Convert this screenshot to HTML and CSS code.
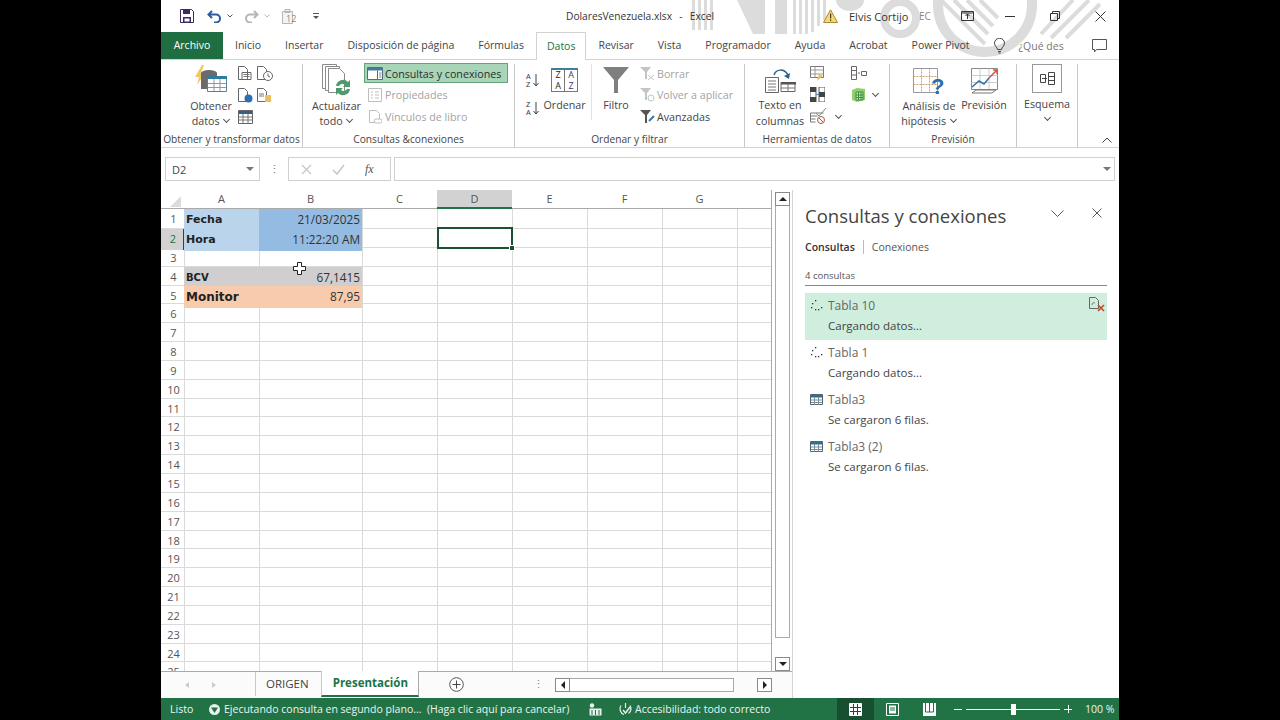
FILE: index.html
```html
<!DOCTYPE HTML>
<html>
<head>
    <title>DolaresVenezuela.xlsx - Excel</title>
    <link rel="stylesheet" href="styles.css">
</head>
<body>
<div class="app">
    <!-- watermark behind title bar and tabs -->
    <svg class="title_art" width="958" height="60" viewBox="0 0 958 60">
        <g fill="#dcdcdc">
            <path d="M576 0h28v34h-12z"/>
            <path d="M614 0h12v34h-12z"/>
            <path d="M632 0h3v34h-3zM638 0h3v34h-3zM644 0h3v34h-3zM650 0h3v32h-3zM656 0h3v26h-3zM662 0h3v20h-3z"/>
            <path d="M531 0h3v30h-3zM537 0h3v30h-3zM543 0h3v30h-3zM549 0h3v30h-3z"/>
            <path d="M675 0h28a14 11 0 0 1-28 0z"/>
        </g>
        <g fill="none" stroke="#dcdcdc">
            <circle cx="739" cy="18" r="16" stroke-width="8"/>
            <circle cx="824" cy="5" r="47" stroke-width="10"/>
            <path d="M780 0l44 44M793 0l34 34M806 0l26 26M819 0l18 18" stroke-width="4"/>
            <path d="M880 34l32-34M890 38l38-38M905 38l34-34" stroke-width="4"/>
        </g>
    </svg>

    <header class="titlebar">
        <div class="qat">
            <svg class="q_save" width="14" height="14" viewBox="0 0 14 14"><path d="M.5.5h11l2 2v11H.5z" fill="#fff" stroke="#3b2a63"/><path d="M3 1h7v4H3zM3 8h8v5H3z" fill="#3b2a63"/><path d="M4.500 9.500h5v3h-5z" fill="#fff"/></svg>
            <svg class="q_undo" width="15" height="13" viewBox="0 0 15 13"><path d="M5 1L1.500 4.500 5 8" fill="none" stroke="#2c5aa0" stroke-width="2"/><path d="M2 4.500h7a4 4 0 0 1 0 8H7" fill="none" stroke="#2c5aa0" stroke-width="2"/></svg>
            <svg class="q_chev" width="6" height="4" viewBox="0 0 6 4"><path d="M.5.5L3 3 5.500.5" fill="none" stroke="#555"/></svg>
            <svg class="q_redo" width="15" height="13" viewBox="0 0 15 13"><path d="M10 1l3.500 3.500L10 8" fill="none" stroke="#b5b5b5" stroke-width="2"/><path d="M13 4.500H6a4 4 0 0 0 0 8h2" fill="none" stroke="#b5b5b5" stroke-width="2"/></svg>
            <svg class="q_chev" width="6" height="4" viewBox="0 0 6 4"><path d="M.5.5L3 3 5.500.5" fill="none" stroke="#bbb"/></svg>
            <span class="q_doc"><svg width="11" height="15" viewBox="0 0 11 15"><path d="M.5 2.500h10v12H.5zM3 .5h5v3H3z" fill="#f4f4f4" stroke="#b5b5b5"/></svg><i>12</i></span>
            <svg class="q_more" width="6" height="6" viewBox="0 0 6 6"><path d="M0 .5h6" stroke="#555"/><path d="M0 3h6L3 6z" fill="#555"/></svg>
        </div>
        <div class="doc_name">DolaresVenezuela.xlsx &nbsp;-&nbsp; Excel</div>
        <svg class="warn" width="15" height="14" viewBox="0 0 15 14"><path d="M7.500.8L14.500 13.500H.5z" fill="#f4d77e" stroke="#a98a2c"/><path d="M7 4.500h1.200v5H7zM7 10.500h1.200v1.500H7z" fill="#4a3d10"/></svg>
        <div class="user">Elvis Cortijo</div>
        <div class="initials">EC</div>
        <svg class="win_ribbon" width="13" height="10" viewBox="0 0 13 10"><path d="M.5.5h12v9H.5z" fill="none" stroke="#333"/><path d="M6.500 8V3M4.500 5l2-2 2 2M1 2h11" fill="none" stroke="#333"/></svg>
        <svg class="win_min" width="10" height="1" viewBox="0 0 10 1"><path d="M0 .5h10" stroke="#333"/></svg>
        <svg class="win_restore" width="10" height="10" viewBox="0 0 10 10"><path d="M.5 2.500h7v7h-7zM2.500 2.500v-2h7v7h-2" fill="none" stroke="#333"/></svg>
        <svg class="win_close" width="11" height="11" viewBox="0 0 11 11"><path d="M.5.5l10 10M10.500.5l-10 10" stroke="#333"/></svg>
    </header>

    <nav class="tabs">
        <a href="#" class="tab tab_file">Archivo</a>
        <a href="#" class="tab">Inicio</a>
        <a href="#" class="tab">Insertar</a>
        <a href="#" class="tab">Disposición de página</a>
        <a href="#" class="tab">Fórmulas</a>
        <a href="#" class="tab tab_on">Datos</a>
        <a href="#" class="tab">Revisar</a>
        <a href="#" class="tab">Vista</a>
        <a href="#" class="tab">Programador</a>
        <a href="#" class="tab">Ayuda</a>
        <a href="#" class="tab">Acrobat</a>
        <a href="#" class="tab">Power Pivot</a>
        <svg class="bulb" width="11" height="16" viewBox="0 0 11 16"><path d="M3.500 11.500C3 9 .5 8 .5 5.200a5 5 0 0 1 10 0C10.500 8 8 9 7.500 11.500zM4 13.500h3M4.500 15h2" fill="none" stroke="#444"/></svg>
        <span class="tell_me">¿Qué des</span>
        <svg class="comment" width="15" height="14" viewBox="0 0 15 14"><path d="M.5.5h14v10H4.500l-2 2.500v-2.500h-2z" fill="#fff" stroke="#555"/></svg>
    </nav>

    <section class="ribbon">
        <div class="group g_get">
            <div class="group_body">
                <div class="big_btn b_get">
                    <svg width="34" height="32" viewBox="0 0 34 32"><path d="M8 0L1 12h4l-2 8 8-12H7l3-8z" fill="#f3c75f"/><ellipse cx="15" cy="8" rx="8" ry="3" fill="#6b6b6b"/><path d="M7 8h16v16H7z" fill="#6b6b6b"/><path d="M13.500 11.500h19v15h-19z" fill="#fff" stroke="#5f7f95"/><path d="M13 11h20v3H13z" fill="#2f7d9e"/><path d="M20 14v12M26 14v12M14 18.500h18M14 22.500h18" stroke="#8a9aa5"/></svg>
                    <span>Obtener<br>datos <i class="chev"></i></span>
                </div>
                <div class="mini_grid">
                    <svg width="14" height="15" viewBox="0 0 14 15"><path d="M.5.500h6l3 3v10h-9zM4 6.500h9v7H4z" fill="#fff" stroke="#666"/><path d="M5.500 8.500h6M5.500 10.500h6" stroke="#777"/></svg>
                    <svg width="16" height="15" viewBox="0 0 16 15"><path d="M.5.500h6l3 3v10h-9z" fill="#fff" stroke="#666"/><circle cx="11" cy="10" r="4.500" fill="#fff" stroke="#666"/><path d="M11 7.500V10l2 1" fill="none" stroke="#666"/></svg>
                    <svg width="15" height="15" viewBox="0 0 15 15"><path d="M.5.500h6l3 3v10h-9z" fill="#fff" stroke="#666"/><circle cx="10.500" cy="10.500" r="4" fill="#2c6fb0"/></svg>
                    <svg width="15" height="15" viewBox="0 0 15 15"><path d="M.5.500h6l3 3v10h-9z" fill="#fff" stroke="#666"/><path d="M2 6h5M2 8h5" stroke="#777"/><path d="M8 7h6v7H8z" fill="#eebf5c"/></svg>
                    <svg width="15" height="14" viewBox="0 0 15 14"><path d="M.5.500h14v13H.5z" fill="#fff" stroke="#666"/><path d="M1 1h13v3H1z" fill="#3c5e78"/><path d="M5 4v9M10 4v9M1 7h13M1 10h13" stroke="#777"/></svg>
                </div>
            </div>
            <div class="group_label">Obtener y transformar datos</div>
        </div>

        <div class="group g_conn">
            <div class="group_body">
                <div class="big_btn b_refresh">
                    <svg width="32" height="33" viewBox="0 0 32 33"><g fill="#fff" stroke="#8a8a8a"><path d="M1.500.5h14v24h-14z"/><path d="M4.500 2.500h14v24h-14z"/><path d="M7.500 4.500h11l5 5v19h-16z"/></g><path d="M15 22a7 7 0 0 1 12-4l2-2v7h-7l2-2a4 4 0 0 0-6 1z" fill="#4f9a6a"/><path d="M29 25a7 7 0 0 1-12 4l-2 2v-7h7l-2 2a4 4 0 0 0 6-1z" fill="#4f9a6a"/></svg>
                    <span>Actualizar<br>todo <i class="chev"></i></span>
                </div>
                <div class="small_list">
                    <div class="small_btn small_on">
                        <svg width="16" height="13" viewBox="0 0 16 13"><path d="M.5.500h15v12H.5z" fill="#fff" stroke="#4f6f85"/><path d="M1 1h14v2.500H1z" fill="#3f7d9a"/><path d="M10.500 3.500v9" stroke="#4f6f85"/><path d="M12 6h2.500M12 8h2.500M12 10h2.500" stroke="#888"/></svg>
                        Consultas y conexiones
                    </div>
                    <div class="small_btn small_off">
                        <svg width="14" height="14" viewBox="0 0 14 14"><path d="M.5.500h13v13H.5z" fill="#fff" stroke="#bdbdbd"/><path d="M3 4h2M7 4h4M3 7h2M7 7h4M3 10h2M7 10h4" stroke="#bdbdbd"/></svg>
                        Propiedades
                    </div>
                    <div class="small_btn small_off">
                        <svg width="14" height="14" viewBox="0 0 14 14"><path d="M1.500.5h7l3 3v9h-10z" fill="#fff" stroke="#bdbdbd"/><path d="M6 11a2 2 0 0 1 2-2h4a2 2 0 0 1 0 4H8a2 2 0 0 1-2-2z" fill="#fff" stroke="#bdbdbd"/></svg>
                        Vínculos de libro
                    </div>
                </div>
            </div>
            <div class="group_label">Consultas &amp;conexiones</div>
        </div>

        <div class="group g_sort">
            <div class="group_body">
                <div class="sort_col">
                    <span class="sort_btn"><i>A<br>Z</i><svg width="6" height="13" viewBox="0 0 6 13"><path d="M3 0v12M.5 9L3 12l2.500-3" fill="none" stroke="#444"/></svg></span>
                    <span class="sort_btn"><i>Z<br>A</i><svg width="6" height="13" viewBox="0 0 6 13"><path d="M3 0v12M.5 9L3 12l2.500-3" fill="none" stroke="#444"/></svg></span>
                </div>
                <div class="big_btn b_order">
                    <span class="order_icon"><b>Z<br>A</b><b>A<br>Z</b></span>
                    <span>Ordenar</span>
                </div>
                <div class="big_btn b_filter">
                    <svg width="26" height="26" viewBox="0 0 26 26"><path d="M0 0h26L15 13v13h-4V13z" fill="#7f7f7f"/></svg>
                    <span>Filtro</span>
                </div>
                <div class="small_list s_filter">
                    <div class="small_btn small_off">
                        <svg width="15" height="14" viewBox="0 0 15 14"><path d="M0 0h11L7 5v7H5V5z" fill="#c4c4c4"/><path d="M8 8l6 5M14 8l-6 5" stroke="#c4c4c4"/></svg>
                        Borrar
                    </div>
                    <div class="small_btn small_off">
                        <svg width="15" height="14" viewBox="0 0 15 14"><path d="M0 0h11L7 5v7H5V5z" fill="#c4c4c4"/><circle cx="11" cy="10" r="3" fill="none" stroke="#b8cfc0"/></svg>
                        Volver a aplicar
                    </div>
                    <div class="small_btn">
                        <svg width="15" height="14" viewBox="0 0 15 14"><path d="M0 0h11L7 5v8H5V5z" fill="#555"/><path d="M9 11l5-5" stroke="#2f78b5" stroke-width="2"/></svg>
                        Avanzadas
                    </div>
                </div>
            </div>
            <div class="group_label">Ordenar y filtrar</div>
        </div>

        <div class="group g_tools">
            <div class="group_body">
                <div class="big_btn b_text">
                    <svg width="31" height="25" viewBox="0 0 31 25"><path d="M.5 9.500h13v15H.5z" fill="#fff" stroke="#666"/><path d="M3 13h8M3 16h8M3 19h8M3 22h8" stroke="#777"/><path d="M16 14.500h14v9H16z" fill="#fff" stroke="#666"/><path d="M16 14h15v2.500H16z" fill="#555"/><path d="M23 16v8M16 20h14" stroke="#777"/><path d="M9 7C11 1 19 0 23 7" fill="none" stroke="#2c5f8c" stroke-width="1.500"/><path d="M19 8l5 3 1-6z" fill="#2c5f8c"/></svg>
                    <span>Texto en<br>columnas</span>
                </div>
                <div class="tool_col t_a">
                    <svg width="15" height="15" viewBox="0 0 15 15"><path d="M.5.500h13v11H.5z" fill="#fff" stroke="#777"/><path d="M.5 4h13M.5 8h13M5 .5v11" stroke="#999"/><path d="M9 8L7 15l6-5z" fill="#eebf5c"/></svg>
                    <svg width="15" height="15" viewBox="0 0 15 15"><path d="M0 0h6v15H0zM9 0h6v15H9z" fill="#fff" stroke="#555"/><path d="M0 0h6v5H0zM0 10h6v5H0zM9 5h6v5H9z" fill="#444"/><path d="M6.500 7.500h2" stroke="#2c6fb0"/></svg>
                    <span class="with_chev"><svg width="17" height="16" viewBox="0 0 17 16"><path d="M.5 5h13M.5 8h7M.5 11h5M.5 14h5M.5 5v9" fill="none" stroke="#777"/><path d="M6 5l3 3 7-8" fill="none" stroke="#5f9a6e"/><circle cx="11" cy="12" r="3.500" fill="#fff" stroke="#b4544a"/><path d="M9 10l4 4" stroke="#b4544a"/></svg><i class="chev"></i></span>
                </div>
                <div class="tool_col t_b">
                    <svg width="16" height="14" viewBox="0 0 16 14"><path d="M.5.500h5v13h-5z" fill="#fff" stroke="#666"/><path d="M1 4.500h4M1 9h4" stroke="#666"/><path d="M7 7h2" stroke="#666"/><path d="M10.500 5.500h5v4h-5z" fill="#fff" stroke="#666"/></svg>
                    <span class="with_chev"><svg width="15" height="15" viewBox="0 0 15 15"><path d="M1 3l5-2 8 1v11l-8 2-5-2z" fill="#8fd06a"/><path d="M5 5h7v8H5z" fill="#c8e9b3" stroke="#3f8d3f"/><path d="M7.500 5v8M10 5v8M5 8h7M5 10.500h7" stroke="#3f8d3f"/></svg><i class="chev"></i></span>
                </div>
            </div>
            <div class="group_label">Herramientas de datos</div>
        </div>

        <div class="group g_fore">
            <div class="group_body">
                <div class="big_btn b_whatif">
                    <svg width="33" height="28" viewBox="0 0 33 28"><path d="M.5.500h24v24H.5z" fill="#fff" stroke="#999"/><path d="M8.500.5v24M16.500.5v24M.5 8.500h24M.5 16.500h24" stroke="#c9a26a" stroke-dasharray="2 1"/><text x="18" y="26" class="whatif_mark">?</text></svg>
                    <span>Análisis de<br>hipótesis <i class="chev"></i></span>
                </div>
                <div class="big_btn b_fore">
                    <svg width="27" height="26" viewBox="0 0 27 26"><path d="M.5.500h26v21H.5z" fill="#fff" stroke="#888"/><path d="M9 .5v21M18 .5v21M.5 7.500h26M.5 14.500h26" stroke="#ccc"/><path d="M1 19l7-6 5 3 5-6" fill="none" stroke="#2f72a8" stroke-width="1.500"/><path d="M18 10l8-8M22 2h4v4" fill="none" stroke="#d3543a" stroke-width="1.500"/><path d="M1 25l4-3h20l-4 3z" fill="#fff" stroke="#777"/></svg>
                    <span>Previsión</span>
                </div>
            </div>
            <div class="group_label">Previsión</div>
        </div>

        <div class="group g_outline">
            <div class="group_body">
                <div class="big_btn b_outline">
                    <span class="outline_box"><svg width="15" height="13" viewBox="0 0 15 13"><path d="M8.500.5h6v12h-6zM8.500 4.500h6M8.500 8.500h6M.5 2.500h5v8h-5zM2 6.500h5" fill="none" stroke="#444"/></svg></span>
                    <span>Esquema</span>
                    <i class="chev"></i>
                </div>
            </div>
        </div>
        <svg class="collapse" width="10" height="6" viewBox="0 0 10 6"><path d="M.5 5.500L5 1l4.500 4.500" fill="none" stroke="#444"/></svg>
    </section>

    <div class="formula_bar">
        <div class="name_box">D2<i class="caret"></i></div>
        <span class="fx_dots">⋮</span>
        <div class="fx_btns">
            <svg width="11" height="11" viewBox="0 0 11 11"><path d="M1 1l9 9M10 1l-9 9" stroke="#c6c6c6" stroke-width="1.300"/></svg>
            <svg width="13" height="11" viewBox="0 0 13 11"><path d="M1 6l4 4 7-9" fill="none" stroke="#c6c6c6" stroke-width="1.500"/></svg>
            <span class="fx_mark">fx</span>
        </div>
        <div class="fx_input"><i class="caret"></i></div>
    </div>

    <main class="workarea">
        <div class="book">
            <div class="sheet_row">
                <div class="sheet">
                    <div class="row row_head">
                        <span class="rh corner"></span>
                        <span>A</span><span>B</span><span>C</span><span class="col_on">D</span><span>E</span><span>F</span><span>G</span><span></span>
                    </div>
                    <div class="row row_first">
                        <span class="rh">1</span>
                        <span class="cell lbl blue_l">Fecha</span>
                        <span class="cell num blue_d">21/03/2025</span>
                    </div>
                    <div class="row">
                        <span class="rh rh_on">2</span>
                        <span class="cell lbl blue_l">Hora</span>
                        <span class="cell num blue_d">11:22:20 AM</span>
                        <span class="cell"></span>
                        <span class="active_cell"><i></i></span>
                    </div>
                    <div class="row"><span class="rh">3</span></div>
                    <div class="row">
                        <span class="rh">4</span>
                        <span class="cell lbl lbl_small grey">BCV</span>
                        <span class="cell num grey">67,1415</span>
                    </div>
                    <div class="row">
                        <span class="rh">5</span>
                        <span class="cell lbl lbl_big orange">Monitor</span>
                        <span class="cell num orange">87,95</span>
                    </div>
                    <div class="row"><span class="rh">6</span></div>
                    <div class="row"><span class="rh">7</span></div>
                    <div class="row"><span class="rh">8</span></div>
                    <div class="row"><span class="rh">9</span></div>
                    <div class="row"><span class="rh">10</span></div>
                    <div class="row"><span class="rh">11</span></div>
                    <div class="row"><span class="rh">12</span></div>
                    <div class="row"><span class="rh">13</span></div>
                    <div class="row"><span class="rh">14</span></div>
                    <div class="row"><span class="rh">15</span></div>
                    <div class="row"><span class="rh">16</span></div>
                    <div class="row"><span class="rh">17</span></div>
                    <div class="row"><span class="rh">18</span></div>
                    <div class="row"><span class="rh">19</span></div>
                    <div class="row"><span class="rh">20</span></div>
                    <div class="row"><span class="rh">21</span></div>
                    <div class="row"><span class="rh">22</span></div>
                    <div class="row"><span class="rh">23</span></div>
                    <div class="row"><span class="rh">24</span></div>
                    <div class="row"><span class="rh">25</span></div>
                    <svg class="cursor" width="13" height="13" viewBox="0 0 13 13"><path d="M4.500.5h4v4h4v4h-4v4h-4v-4h-4v-4h4z" fill="#fff" stroke="#222"/></svg>
                </div>
                <div class="vscroll">
                    <span class="sb_btn"><i class="arr_up"></i></span>
                    <span class="sb_thumb"></span>
                    <span class="sb_btn"><i class="arr_down"></i></span>
                </div>
            </div>
            <div class="sheet_tabs">
                <span class="nav_arrow arr_left"></span>
                <span class="nav_arrow arr_right"></span>
                <span class="s_tab">ORIGEN</span>
                <span class="s_tab s_tab_on">Presentación</span>
                <svg class="s_add" width="15" height="15" viewBox="0 0 15 15"><circle cx="7.500" cy="7.500" r="6.800" fill="#fff" stroke="#555"/><path d="M7.500 3.500v8M3.500 7.500h8" stroke="#444"/></svg>
                <span class="s_dots">⋮</span>
                <div class="hscroll">
                    <span class="sb_btn"><i class="arr_l"></i></span>
                    <span class="sb_thumb"></span>
                    <span class="sb_track"></span>
                    <span class="sb_btn"><i class="arr_r"></i></span>
                </div>
            </div>
        </div>

        <aside class="pane">
            <div class="pane_head">
                <h2>Consultas y conexiones</h2>
                <svg class="pane_chev" width="13" height="7" viewBox="0 0 13 7"><path d="M.5.5l6 6 6-6" fill="none" stroke="#555"/></svg>
                <svg class="pane_x" width="10" height="10" viewBox="0 0 10 10"><path d="M.5.5l9 9M9.500.5l-9 9" stroke="#555"/></svg>
            </div>
            <div class="pane_tabs">
                <b>Consultas</b><span>Conexiones</span>
            </div>
            <div class="pane_count">4 consultas</div>
            <div class="query query_on">
                <div class="q_name">
                    <svg class="spin" width="14" height="12" viewBox="0 0 14 12"><g fill="#333"><rect x="5" y="0" width="1.300" height="1.300"/><rect x="2" y="3" width="1.300" height="1.300"/><rect x="1" y="7" width="1.300" height="1.300"/><rect x="5" y="9" width="1.300" height="1.300"/><rect x="8" y="9" width="1.300" height="1.300"/><rect x="11" y="7" width="1.300" height="1.300"/></g></svg>
                    Tabla 10
                </div>
                <div class="q_state">Cargando datos...</div>
                <svg class="q_cancel" width="16" height="15" viewBox="0 0 16 15"><path d="M.5.5h6l3 3v8h-9z" fill="none" stroke="#666"/><path d="M3 8a2 2 0 0 1 3-2" fill="none" stroke="#777"/><path d="M9 8l6 6M15 8l-6 6" stroke="#c8452c" stroke-width="1.600"/></svg>
            </div>
            <div class="query">
                <div class="q_name">
                    <svg class="spin" width="14" height="12" viewBox="0 0 14 12"><g fill="#333"><rect x="5" y="0" width="1.300" height="1.300"/><rect x="2" y="3" width="1.300" height="1.300"/><rect x="1" y="7" width="1.300" height="1.300"/><rect x="5" y="9" width="1.300" height="1.300"/><rect x="8" y="9" width="1.300" height="1.300"/><rect x="11" y="7" width="1.300" height="1.300"/></g></svg>
                    Tabla 1
                </div>
                <div class="q_state">Cargando datos...</div>
            </div>
            <div class="query">
                <div class="q_name">
                    <svg class="spin" width="14" height="12" viewBox="0 0 14 12"><path d="M.5.5h12v10H.5z" fill="#fff" stroke="#55656f"/><path d="M1 1h11v2.500H1z" fill="#2f6f92"/><path d="M4.500 3v8M8.500 3v8M1 6h11M1 8.500h11" stroke="#7d8d97"/></svg>
                    Tabla3
                </div>
                <div class="q_state">Se cargaron 6 filas.</div>
            </div>
            <div class="query">
                <div class="q_name">
                    <svg class="spin" width="14" height="12" viewBox="0 0 14 12"><path d="M.5.5h12v10H.5z" fill="#fff" stroke="#55656f"/><path d="M1 1h11v2.500H1z" fill="#2f6f92"/><path d="M4.500 3v8M8.500 3v8M1 6h11M1 8.500h11" stroke="#7d8d97"/></svg>
                    Tabla3 (2)
                </div>
                <div class="q_state">Se cargaron 6 filas.</div>
            </div>
        </aside>
    </main>

    <footer class="statusbar">
        <span class="st_ready">Listo</span>
        <svg class="st_run" width="11" height="11" viewBox="0 0 11 11"><circle cx="5.500" cy="5.500" r="5.500" fill="#e8f1ec"/><path d="M2 3.500h7L5.500 9z" fill="#217346"/></svg>
        <span class="st_msg">Ejecutando consulta en segundo plano... &nbsp;(Haga clic aquí para cancelar)</span>
        <svg class="st_macro" width="13" height="13" viewBox="0 0 13 13"><circle cx="3" cy="2.500" r="2.200" fill="#e9f1ec"/><path d="M.5 5.500h12v7H.5z" fill="#e9f1ec"/><path d="M3 7v5M6.500 7v5M10 7v5" stroke="#217346"/></svg>
        <svg class="st_acc" width="15" height="14" viewBox="0 0 15 14"><path d="M7.500 1v5M3 3.500a6 6 0 0 0 3 9M12 3.500a6 6 0 0 1-1.500 8" fill="none" stroke="#e9f1ec" stroke-width="1.200"/><path d="M5 8l2.500 3L12 5" fill="none" stroke="#e9f1ec" stroke-width="1.400"/></svg>
        <span class="st_acc_text">Accesibilidad: todo correcto</span>
        <div class="views">
            <span class="view view_on"><svg width="13" height="13" viewBox="0 0 13 13"><path d="M.5.500h12v12H.5z" fill="#fff" stroke="#fff"/><path d="M4.500 1v11M8.500 1v11M1 4.500h11M1 8.500h11" stroke="#174f30"/></svg></span>
            <span class="view"><svg width="13" height="13" viewBox="0 0 13 13"><path d="M.5.500h12v12H.5z" fill="none" stroke="#fff"/><path d="M3 2.500h7v8H3z" fill="#fff"/><path d="M4 5h5M4 7h5" stroke="#217346"/></svg></span>
            <span class="view"><svg width="13" height="13" viewBox="0 0 13 13"><path d="M0 0h13v13H0z" fill="#fff"/><path d="M6.500 0v9M2.500 0v9h8V0" fill="none" stroke="#217346"/></svg></span>
        </div>
        <div class="zoom_ctl">
            <i class="z_minus"></i>
            <span class="z_track"><i></i></span>
            <i class="z_plus"></i>
            <span class="z_val">100 %</span>
        </div>
    </footer>
</div>
</body>
</html>
```

FILE: styles.css
```css
body {
    margin: 0;
    background-color: #000;
    font-family: "Open Sans", "Liberation Sans", sans-serif;
    font-size: 10.7px;
    color: #444;
}

i {
    font-style: normal;
}

.app {
    position: relative;
    display: flex;
    flex-direction: column;
    width: 958px;
    height: 720px;
    margin-left: 161px;
    overflow: hidden;
    background-color: #fff;
}

.title_art {
    position: absolute;
    top: 0;
    left: 0;
}

/* title bar */
.titlebar {
    position: relative;
    display: flex;
    align-items: center;
    height: 32px;
    flex: none;
}

.qat {
    display: flex;
    align-items: center;
    width: 405px;
    padding-left: 19px;
    box-sizing: border-box;
    flex: none;
}

.q_undo { margin-left: 13px; }
.q_redo { margin-left: 11px; }
.q_chev { margin-left: 5px; }
.q_doc { position: relative; margin-left: 12px; height: 15px; }
.q_doc i {
    position: absolute;
    left: 4px;
    top: 5px;
    font-size: 9px;
    line-height: 10px;
    color: #888;
}
.q_more { margin-left: 20px; }

.doc_name { width: 257px; font-size: 10.2px; word-spacing: 1px; color: #333; white-space: nowrap; }
.user { margin-left: 11px; width: 70px; font-size: 11px; color: #333; white-space: nowrap; }
.initials { width: 36px; font-size: 10px; color: #888; }
.win_ribbon { margin-left: 6px; }
.win_min { margin-left: 31px; }
.win_restore { margin-left: 35px; }
.win_close { margin-left: 35px; }

/* tabs */
.tabs {
    position: relative;
    display: flex;
    align-items: center;
    height: 28px;
    flex: none;
    box-sizing: border-box;
    border-bottom: 1px solid #d2d2d2;
    font-size: 10.5px;
}

.tab {
    display: block;
    flex: none;
    padding: 0 12px;
    line-height: 27px;
    height: 27px;
    color: #444;
    text-decoration: none;
    white-space: nowrap;
}

.tab_file {
    width: 62px;
    box-sizing: border-box;
    padding: 0;
    text-align: center;
    background-color: #1e6e42;
    color: #fff;
}

.tab_on {
    height: 28px;
    box-sizing: border-box;
    border: 1px solid #d2d2d2;
    border-bottom: none;
    background-color: #fff;
    color: #217346;
    line-height: 26px;
    padding: 0 10px;
    align-self: flex-start;
}

.bulb { margin-left: 12px; flex: none; }
.tell_me { margin-left: 14px; color: #777; white-space: nowrap; flex: none; }
.comment { margin-left: 28px; flex: none; }

/* ribbon */
.ribbon {
    position: relative;
    display: flex;
    height: 88px;
    flex: none;
    box-sizing: border-box;
    border-bottom: 1px solid #d2d2d2;
}

.group {
    display: flex;
    flex-direction: column;
    height: 83px;
    box-sizing: border-box;
    border-right: 1px solid #c9c9c9;
    margin-top: 4px;
}

.group_body {
    display: flex;
    height: 66px;
    flex: none;
}

.group_label {
    text-align: center;
    font-size: 10.2px;
    line-height: 14px;
    margin-top: 2px;
    color: #444;
    white-space: nowrap;
}

.g_get { width: 142px; }
.g_conn { width: 212px; }
.g_sort { width: 230px; }
.g_tools { width: 145px; }
.g_fore { width: 127px; }
.g_outline { width: 61px; }

.big_btn {
    display: flex;
    flex-direction: column;
    align-items: center;
    text-align: center;
    line-height: 15px;
    color: #444;
    flex: none;
}

.big_btn svg {
    flex: none;
    margin-bottom: 7px;
}

.chev {
    display: inline-block;
    width: 4px;
    height: 4px;
    margin: 0 1px 3px 2px;
    border-right: 1px solid #555;
    border-bottom: 1px solid #555;
    transform: rotate(45deg);
}

.b_get { width: 62px; margin-left: 19px; padding-top: 1px; }
.b_get svg { margin-bottom: 2px; }
.mini_grid {
    display: grid;
    grid-template-columns: 19px 19px;
    grid-auto-rows: 21.5px;
    margin: -1px 0 0 -4px;
    align-items: center;
}

.b_refresh { width: 55px; margin-left: 6px; }
.b_refresh svg { margin-bottom: 2px; }

.small_list {
    display: flex;
    flex-direction: column;
    margin-top: -1px;
}

.small_btn {
    display: flex;
    align-items: center;
    gap: 3px;
    height: 21.5px;
    width: 144px;
    box-sizing: border-box;
    padding-left: 4px;
    white-space: nowrap;
    flex: none;
}

.small_btn svg { flex: none; }

.small_on {
    height: 20px;
    margin-bottom: 1.5px;
    background-color: #a8d5b8;
    border: 1px solid #63a47b;
    color: #2c2c2c;
    padding: 1px 0 0 2px;
    gap: 2px;
}

.small_off { color: #a3a3a3; }

.sort_col {
    display: flex;
    flex-direction: column;
    gap: 9px;
    width: 29px;
    padding: 7px 0 0 11px;
    box-sizing: border-box;
    flex: none;
}

.sort_btn {
    display: flex;
    align-items: center;
    gap: 2px;
    height: 19px;
}

.sort_btn i {
    font-size: 7.5px;
    line-height: 7.500px;
    color: #333;
}

.b_order {
    width: 41px;
    padding-right: 6px;
    border-right: 1px solid #e2e2e2;
    height: 56px;
}

.order_icon {
    display: flex;
    width: 27px;
    height: 24px;
    box-sizing: border-box;
    margin: 4px 0 6px;
    border-top: 2px solid #3f7d9a;
    border-left: 1px solid #777;
    border-right: 1px solid #777;
    border-bottom: 1px solid #777;
}

.order_icon b {
    flex: 1;
    font-weight: normal;
    font-size: 9px;
    line-height: 10.500px;
    color: #222;
}

.order_icon b + b {
    border-left: 1px solid #777;
    color: #3a3a6a;
}

.b_filter { width: 48px; padding-top: 3px; }
.b_filter svg { margin-bottom: 5px; }

.s_filter .small_btn { padding-left: 0; width: 100px; gap: 2px; }

.b_text { width: 60px; margin-left: 5px; padding-top: 4px; }
.b_text svg { margin-bottom: 5px; }
.b_text span { line-height: 15.5px; }

.tool_col {
    display: flex;
    flex-direction: column;
    justify-content: space-between;
    height: 60px;
    padding-top: 2px;
    box-sizing: border-box;
    flex: none;
}

.t_a { width: 41px; }
.t_a svg { flex: none; }
.t_b { height: 38px; }

.with_chev {
    display: flex;
    align-items: center;
    gap: 9px;
}

.t_b .with_chev { gap: 7px; }

.with_chev .chev { margin: 0 0 2px; }

.b_whatif { width: 72px; margin-left: 3px; padding-top: 4px; }
.b_whatif svg { margin-bottom: 3px; overflow: visible; }
.b_fore { width: 48px; padding-top: 4px; margin-left: -5px; }
.b_fore svg { margin-bottom: 4px; }

.whatif_mark {
    font: bold 22px "Liberation Sans", sans-serif;
    fill: #2c6fb0;
}

.b_outline { width: 60px; }
.b_outline .chev { margin-top: 3px; }

.outline_box {
    display: flex;
    align-items: center;
    justify-content: center;
    width: 30px;
    height: 29px;
    box-sizing: border-box;
    border: 1px solid #999;
    margin-bottom: 4px;
}

.outline_box svg { margin: 0; }

.collapse {
    position: absolute;
    right: 7px;
    bottom: 4px;
}

/* formula bar */
.formula_bar {
    display: flex;
    align-items: stretch;
    height: 24px;
    margin: 9px 4px 9px 4px;
    flex: none;
    color: #444;
    font-size: 11px;
}

.name_box {
    display: flex;
    align-items: center;
    justify-content: space-between;
    width: 95px;
    box-sizing: border-box;
    padding: 0 5px 0 6px;
    border: 1px solid #d0d0d0;
}

.caret {
    width: 0;
    height: 0;
    border-left: 4px solid transparent;
    border-right: 4px solid transparent;
    border-top: 4px solid #777;
}

.fx_dots {
    width: 28px;
    text-align: center;
    line-height: 24px;
    color: #777;
}

.fx_btns {
    display: flex;
    align-items: center;
    gap: 20px;
    width: 103px;
    box-sizing: border-box;
    padding-left: 12px;
    border: 1px solid #d0d0d0;
}

.fx_mark {
    font: italic 12px "Liberation Serif", serif;
    color: #555;
}

.fx_input {
    display: flex;
    align-items: center;
    justify-content: flex-end;
    flex: 1;
    margin-left: 3px;
    padding-right: 3px;
    border: 1px solid #d0d0d0;
}

/* work area */
.workarea {
    display: flex;
    flex: 1;
    min-height: 0;
}

.book {
    display: flex;
    flex-direction: column;
    width: 631px;
    border-right: 1px solid #d4d4d4;
    flex: none;
}

.sheet_row {
    display: flex;
    height: 482px;
    flex: none;
    border-bottom: 1px solid #aaa;
    box-sizing: border-box;
}

.sheet {
    position: relative;
    width: 611px;
    overflow: hidden;
    flex: none;
    border-right: 1px solid #aaa;
    box-sizing: border-box;
    /* column lines */
    background-image:
        linear-gradient(#dadada, #dadada), linear-gradient(#dadada, #dadada),
        linear-gradient(#dadada, #dadada), linear-gradient(#dadada, #dadada),
        linear-gradient(#dadada, #dadada), linear-gradient(#dadada, #dadada),
        linear-gradient(#dadada, #dadada), linear-gradient(#dadada, #dadada);
    background-size: 1px 100%;
    background-repeat: no-repeat;
    background-position: 23px 0, 98px 0, 201px 0, 276px 0, 351px 0, 426px 0, 501px 0, 576px 0;
}

.row {
    display: grid;
    grid-template-columns: 23px 75px 103px 75px 75px 75px 75px 75px 35px;
    height: 18.85px;
    box-sizing: border-box;
    border-bottom: 1px solid #dadada;
    line-height: 20px;
    font-size: 11px;
}

.row_head {
    height: 19px;
    line-height: 18px;
    text-align: center;
    color: #555;
    border-bottom: 1px solid #aaa;
    background-color: #fff;
}

.row_first {
    height: 20px;
    line-height: 20px;
}

.corner {
    position: relative;
}

.corner::after {
    content: "";
    position: absolute;
    right: 3px;
    top: 6px;
    border-left: 11px solid transparent;
    border-bottom: 11px solid #dcdcdc;
}

.col_on {
    background-color: #d2d2d2;
    border-bottom: 2px solid #217346;
    margin-bottom: -1px;
    line-height: 17px;
}

.rh {
    text-align: center;
    color: #555;
    font-size: 11px;
    padding-left: 2px;
}

.rh_on {
    background-color: #d2d2d2;
    border-right: 1px solid #1d4f33;
    color: #217346;
}

.cell {
    padding: 0 2px;
}

.lbl {
    font-family: "DejaVu Sans", sans-serif;
    font-weight: bold;
    font-size: 11px;
    line-height: 22px;
    color: #222;
}

.lbl_small { font-size: 10px; }
.lbl_big { font-size: 12px; }

.num {
    text-align: right;
    color: #333;
    font-size: 11.8px;
}

.blue_l { background-color: #bad4ec; }
.blue_d { background-color: #94bce3; }
.grey { background-color: #d0cece; }
.orange { background-color: #f8cbad; }

.row .cell { margin-bottom: -1px; }

.active_cell {
    position: relative;
    height: 22px;
    width: 76px;
    margin: -2px 0 0 0;
    box-sizing: border-box;
    border: 2px solid #1d4f33;
    background-color: #fff;
}

.active_cell i {
    position: absolute;
    right: -4px;
    bottom: -4px;
    width: 4px;
    height: 4px;
    background-color: #1d4f33;
    border: 1px solid #fff;
}

.cursor {
    position: absolute;
    left: 132px;
    top: 72px;
}

/* scroll bars */
.vscroll {
    display: flex;
    flex-direction: column;
    width: 15px;
    margin: 2px 0 0 3px;
    flex: none;
}

.sb_btn {
    display: flex;
    align-items: center;
    justify-content: center;
    width: 15px;
    height: 14px;
    box-sizing: border-box;
    border: 1px solid #8a8a8a;
    background-color: #fff;
    flex: none;
}

.sb_thumb {
    flex: 1;
    border: 1px solid #aaa;
    border-top: none;
    border-bottom: 1px solid #aaa;
    margin-bottom: 19px;
}

.arr_up, .arr_down {
    width: 0;
    height: 0;
    border-left: 4px solid transparent;
    border-right: 4px solid transparent;
}

.arr_up { border-bottom: 4px solid #222; }
.arr_down { border-top: 4px solid #222; }

.arr_l, .arr_r {
    width: 0;
    height: 0;
    border-top: 4px solid transparent;
    border-bottom: 4px solid transparent;
}

.arr_l { border-right: 4px solid #222; }
.arr_r { border-left: 4px solid #222; }

/* sheet tabs */
.sheet_tabs {
    display: flex;
    align-items: flex-start;
    height: 26px;
    flex: none;
    background-color: #fbfbfb;
}

.nav_arrow {
    width: 0;
    height: 0;
    margin-top: 10px;
    border-top: 3px solid transparent;
    border-bottom: 3px solid transparent;
}

.arr_left { margin-left: 24px; border-right: 4px solid #ccc; }
.arr_right { margin-left: 23px; border-left: 4px solid #ccc; }

.s_tab {
    height: 24px;
    line-height: 24px;
    padding: 0 12px 0 10px;
    font-size: 11.5px;
    color: #444;
    border-left: 1px solid #c8c8c8;
    flex: none;
}

.nav_arrow + .s_tab { margin-left: 39px; }

.s_tab_on {
    margin-top: -1px;
    height: 26px;
    padding: 0 10px 0 11px;
    font-weight: bold;
    color: #217346;
    background-color: #fff;
    border-right: 1px solid #aaa;
    border-bottom: 2px solid #217346;
    box-sizing: border-box;
}

.s_add { margin: 5px 0 0 30px; flex: none; }

.s_dots {
    margin-left: 66px;
    line-height: 24px;
    color: #888;
    width: 16px;
    flex: none;
    text-align: center;
}

.hscroll {
    display: flex;
    width: 217px;
    margin: 6px 0 0 9px;
    flex: none;
}

.hscroll .sb_thumb {
    flex: none;
    width: 164px;
    height: 14px;
    box-sizing: border-box;
    border: 1px solid #aaa;
    border-left: none;
    margin: 0;
    background-color: #fff;
}

.hscroll .sb_track { flex: 1; }

/* task pane */
.pane {
    flex: 1;
    padding: 0 12px 0 12px;
    min-width: 0;
}

.pane_head {
    display: flex;
    align-items: center;
    height: 46px;
}

.pane_head h2 {
    margin: 5px 0 0;
    font-size: 18.5px;
    font-weight: normal;
    color: #444;
    white-space: nowrap;
}

.pane_chev { margin-left: auto; }
.pane_x { margin-left: 28px; margin-right: 5px; }

.pane_tabs {
    display: flex;
    align-items: center;
    height: 16px;
    margin-top: 3px;
    font-size: 10.500px;
}

.pane_tabs b {
    font-weight: 600;
    color: #333;
    padding-right: 8px;
    border-right: 1px solid #bbb;
}

.pane_tabs span {
    padding-left: 8px;
    color: #555;
}

.pane_count {
    margin-top: 14px;
    padding-bottom: 1px;
    height: 15px;
    line-height: 14px;
    font-size: 9.500px;
    color: #555;
    border-bottom: 1px solid #888;
}

.query {
    position: relative;
    height: 47px;
    padding: 2px 0 0 5px;
    box-sizing: border-box;
}

.query_on {
    margin-top: 7px;
    background-color: #cfeedd;
}

.q_name {
    display: flex;
    align-items: center;
    height: 21px;
    font-size: 12px;
    color: #666;
}

.spin {
    margin-right: 4px;
    flex: none;
}

.q_state {
    padding-left: 18px;
    line-height: 20px;
    font-size: 11.5px;
    color: #444;
}

.q_cancel {
    position: absolute;
    right: 2px;
    top: 4px;
}

/* status bar */
.statusbar {
    display: flex;
    align-items: center;
    height: 22px;
    flex: none;
    background-color: #217346;
    color: #eef4f0;
    font-size: 10.500px;
}

.statusbar > * { flex: none; }

.st_ready { margin-left: 9px; width: 39px; }
.st_msg { margin-left: 4px; width: 365px; white-space: nowrap; }
.st_acc { margin-left: 16px; }
.st_acc_text { margin-left: 2px; width: 202px; white-space: nowrap; }

.views {
    display: flex;
    height: 22px;
}

.view {
    display: flex;
    align-items: center;
    justify-content: center;
    width: 37px;
    height: 22px;
}

.view_on { background-color: #174f30; }

.zoom_ctl {
    display: flex;
    align-items: center;
    margin-left: 6px;
}

.z_minus, .z_plus {
    position: relative;
    width: 8px;
    height: 1px;
    background-color: #fff;
    flex: none;
}

.z_plus::after {
    content: "";
    position: absolute;
    left: 3.500px;
    top: -3.500px;
    width: 1px;
    height: 8px;
    background-color: #fff;
}

.z_track {
    position: relative;
    width: 94px;
    height: 1px;
    margin: 0 4px;
    background-color: #fff;
}

.z_track i {
    position: absolute;
    left: 45px;
    top: -5px;
    width: 5px;
    height: 11px;
    background-color: #fff;
}

.z_val {
    margin-left: 13px;
    white-space: nowrap;
}
```
